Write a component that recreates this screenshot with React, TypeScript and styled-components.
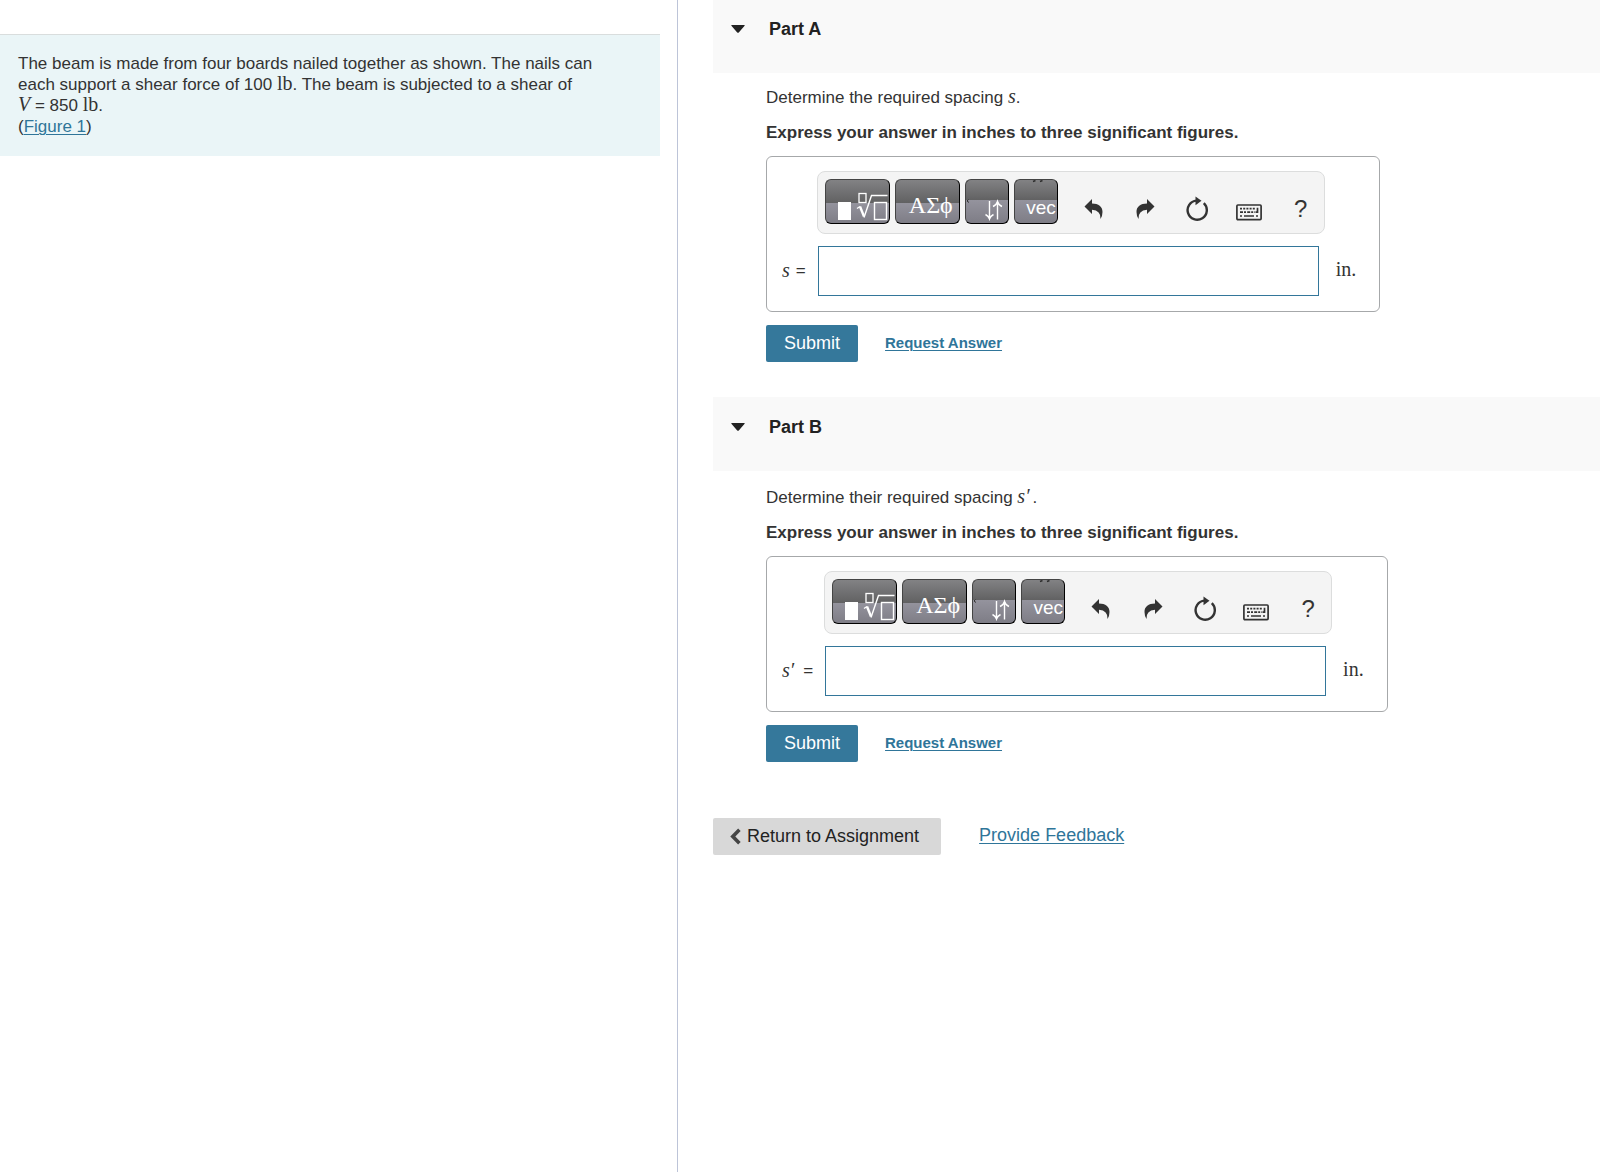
import React, { ReactNode, useId } from "react";
import styled, { createGlobalStyle } from "styled-components";

const GlobalStyle = createGlobalStyle`
  *, *::before, *::after { box-sizing: border-box; }
  body {
    margin: 0;
    background: #fff;
    color: #333;
    font: 17px/21px "Liberation Sans", Arial, Helvetica, sans-serif;
  }
  button, input { font: inherit; color: inherit; }
  a { color: #2f7599; text-decoration: underline; text-underline-offset: 2px; text-decoration-thickness: 1px; }
`;

const Page = styled.div`
  display: grid;
  grid-template-columns: minmax(0, 677fr) minmax(0, 923fr);
  min-height: 100vh;
`;

const ProblemPane = styled.aside`
  padding: 34px 17px 0 0;
`;

const ProblemBox = styled.div`
  padding: 18px 54px 19px 18px;
  border-top: 1px solid #d9dddd;
  background: #eaf5f7;
`;

const Paragraph = styled.p`
  margin: 0;
`;

const Equation = styled.span`
  white-space: nowrap;
`;

const MathText = styled.span<{ $italic?: boolean }>`
  font-family: "Liberation Serif", "Times New Roman", serif;
  font-size: 20px;
  line-height: 0;
  font-style: ${(p) => (p.$italic ? "italic" : "normal")};
`;

const Prime = styled.span`
  margin-right: 3px;
  line-height: 22px;
`;

const WorkPane = styled.main`
  margin-top: -1px;
  border-left: 1px solid #bdc4d8;
  padding-left: 35px;
  overflow: hidden;
`;

const PartHeader = styled.button`
  display: flex;
  align-items: center;
  gap: 24px;
  width: 100%;
  height: 74px;
  padding: 0 18px 14px;
  border: 0;
  background: #f9f9f9;
  color: #222;
  font-size: 18px;
  font-weight: bold;
`;

const PartBody = styled.div`
  padding: 14px 20px 35px 53px;
`;

const Question = styled.p`
  margin: 0 0 14px;
`;

const Instruction = styled.p`
  margin: 0 0 13px;
  font-weight: bold;
`;

const AnswerBox = styled.div`
  display: flex;
  width: fit-content;
  max-width: 100%;
  padding: 14px 23px 15px 15px;
  border: 1px solid #a6a8aa;
  border-radius: 6px;
`;

const AnswerLabel = styled.label`
  display: flex;
  align-items: center;
  gap: 6px;
  height: 50px;
  margin: 75px 11px 0 0;
  padding-bottom: 2px;
`;

const Unit = styled.span`
  display: flex;
  align-items: center;
  height: 50px;
  margin: 75px 0 0 11px;
  padding-bottom: 4px;
`;

const Entry = styled.div`
  flex: 0 1 auto;
  width: 508px;
  min-width: 0;
`;

const Toolbar = styled.div`
  display: flex;
  align-items: flex-start;
  gap: 5px;
  height: 63px;
  padding: 7px;
  border: 1px solid #dcdddd;
  border-radius: 8px;
  background: #f4f4f4;
`;

const MathButton = styled.button<{ $narrow?: boolean }>`
  display: flex;
  flex: none;
  align-items: flex-end;
  justify-content: flex-end;
  width: ${(p) => (p.$narrow ? 44 : 65)}px;
  height: 45px;
  padding: 0;
  border: 1px solid #000;
  border-top-color: #444;
  border-left-color: #444;
  border-radius: 6px;
  overflow: hidden;
  color: #fff;
  background: linear-gradient(
    #828284,
    #616162 ${(p) => (p.$narrow ? 47 : 53)}%,
    #94939d ${(p) => (p.$narrow ? 47 : 53)}%,
    #7e7d86
  );
`;

const GreekText = styled.span`
  padding: 0 6px 5px 0;
  font: 24px/26px "Liberation Serif", "Times New Roman", serif;
`;

const VecText = styled.span`
  padding: 0 1px 3px 0;
  font-size: 19px;
  line-height: 24px;
`;

const VecFace = styled.span`
  display: flex;
  flex-direction: column;
  justify-content: space-between;
  align-items: flex-end;
  height: 100%;
`;

const IconTools = styled.div`
  display: flex;
  flex: 1;
  justify-content: space-between;
  padding: 16px 0 0 15px;
`;

const IconButton = styled.button`
  display: flex;
  align-items: center;
  justify-content: center;
  width: 32px;
  height: 28px;
  padding: 0;
  border: 0;
  background: none;
`;

const HelpMark = styled.span`
  font-size: 24px;
  line-height: 28px;
`;

const AnswerInput = styled.input`
  display: block;
  width: calc(100% - 7px);
  height: 50px;
  margin: 12px 0 0 1px;
  padding: 0 10px;
  border: 1px solid #33769a;
  border-radius: 0;
  background: #fff;
`;

const Actions = styled.div`
  display: flex;
  align-items: center;
  gap: 27px;
  margin-top: 13px;
`;

const SubmitButton = styled.button`
  height: 37px;
  padding: 0 18px 1px;
  border: 0;
  border-radius: 2px;
  background: #35789b;
  color: #fff;
  font-size: 18px;
`;

const RequestLink = styled.a`
  padding-bottom: 2px;
  font-size: 15px;
  font-weight: bold;
`;

const Footer = styled.footer`
  display: flex;
  align-items: center;
  gap: 38px;
  margin-top: 21px;
`;

const ReturnButton = styled.button`
  display: flex;
  align-items: center;
  gap: 6px;
  height: 37px;
  padding: 0 22px 0 17px;
  border: 0;
  border-radius: 2px;
  background: #d8d8d8;
  color: #222;
  font-size: 18px;
`;

const FeedbackLink = styled.a`
  padding-bottom: 2px;
  font-size: 18px;
`;

const CaretIcon = () => (
  <svg width="14" height="8" viewBox="0 0 14 8" aria-hidden="true">
    <path d="M0.8 0H13.2Q14.3 0 13.4 1L8 7.2Q7 8.3 6 7.2L0.6 1Q-0.3 0 0.8 0Z" fill="#222" />
  </svg>
);

const RootIcon = () => (
  <svg width="63" height="43" viewBox="0 0 63 43" aria-hidden="true">
    <rect x="12" y="22" width="13" height="18" fill="#fff" />
    <g fill="none" stroke="#fff">
      <rect x="33" y="13.5" width="7" height="9" strokeWidth="1.3" />
      <rect x="48.5" y="22.5" width="12" height="17" strokeWidth="1.4" />
      <path d="M31 28.5L34 26.5" strokeWidth="1.3" />
      <path d="M34 26.5L38 36.5" strokeWidth="2.4" />
      <path d="M38 37.5L45.5 15.5H61.5" strokeWidth="1.4" />
    </g>
  </svg>
);

const ArrowsIcon = () => (
  <svg width="42" height="43" viewBox="0 0 42 43" aria-hidden="true">
    <path d="M2.5 19.5L1 21L3 22.5" fill="none" stroke="#333" />
    <g fill="none" stroke="#fff" strokeWidth="1.4">
      <path d="M23.5 21V39M19.5 34.5Q22.5 36 23.5 39Q24.5 36 27.5 34.5" />
      <path d="M31.5 39.5V21.5M27 26.5Q30.5 25 31.5 21.5Q32.5 25 36 26.5" />
    </g>
  </svg>
);

const VecMarks = () => (
  <svg width="42" height="3" viewBox="0 0 42 3" aria-hidden="true">
    <path d="M18 1.5L20.5 0.5M25 1.5L27.5 0.5" stroke="#2b2b2b" strokeWidth="1.4" />
  </svg>
);

const BackArrow = ({ mirrored }: { mirrored?: boolean }) => (
  <svg width="20" height="20" viewBox="0 0 20 20" aria-hidden="true">
    <path
      d="M0.5 7.5L8 0V4.5C14.5 4.5 18.5 7.5 18.5 13Q18.5 17 16.5 20Q17 11.5 8 10.8V15Z"
      fill="#333"
      transform={mirrored ? "translate(20 0) scale(-1 1)" : undefined}
    />
  </svg>
);

const ResetIcon = () => (
  <svg width="24" height="26" viewBox="0 0 24 26" aria-hidden="true">
    <path d="M18.8 7.2A9.6 9.6 0 1 1 11.5 4.6" fill="none" stroke="#333" strokeWidth="2.4" />
    <path d="M10.5 0.5L16.5 4.8L10.5 9.2Z" fill="#333" />
  </svg>
);

const KeyboardIcon = () => (
  <svg width="26" height="26" viewBox="0 -5 26 26" aria-hidden="true">
    <rect x="0.9" y="4" width="24.2" height="14.6" rx="1" fill="none" stroke="#333" strokeWidth="1.7" />
    <g stroke="#333" strokeWidth="1.7" fill="none">
      <path d="M4 7.7H19" strokeDasharray="2 1.2" />
      <path d="M4 11.2H19" strokeDasharray="3 1 2 1.2" />
      <path d="M4 15H6M8 15H18M20 15H22" />
      <path d="M21.5 6.8V12M19.5 11.2H22.3" />
    </g>
  </svg>
);

const ChevronIcon = () => (
  <svg width="11" height="17" viewBox="0 0 11 17" aria-hidden="true">
    <path d="M9.4 1.8L2.8 8.5L9.4 15.2" fill="none" stroke="#444" strokeWidth="3.6" />
  </svg>
);

const AnswerPart = ({ title, question, primed }: { title: string; question: string; primed?: boolean }) => {
  const inputId = useId();
  const variable: ReactNode = <MathText $italic>s{primed && <Prime>′</Prime>}</MathText>;
  return (
    <section>
      <PartHeader type="button" aria-expanded="true">
        <CaretIcon />
        {title}
      </PartHeader>
      <PartBody>
        <Question>
          {question} {variable}.
        </Question>
        <Instruction>Express your answer in inches to three significant figures.</Instruction>
        <AnswerBox>
          <AnswerLabel htmlFor={inputId}>
            {variable}
            <span>=</span>
          </AnswerLabel>
          <Entry>
            <Toolbar>
              <MathButton type="button" aria-label="Templates">
                <RootIcon />
              </MathButton>
              <MathButton type="button">
                <GreekText>ΑΣϕ</GreekText>
              </MathButton>
              <MathButton type="button" $narrow aria-label="Arrows">
                <ArrowsIcon />
              </MathButton>
              <MathButton type="button" $narrow>
                <VecFace>
                  <VecMarks />
                  <VecText>vec</VecText>
                </VecFace>
              </MathButton>
              <IconTools>
                <IconButton type="button" aria-label="Undo">
                  <BackArrow />
                </IconButton>
                <IconButton type="button" aria-label="Redo">
                  <BackArrow mirrored />
                </IconButton>
                <IconButton type="button" aria-label="Reset">
                  <ResetIcon />
                </IconButton>
                <IconButton type="button" aria-label="Keyboard shortcuts">
                  <KeyboardIcon />
                </IconButton>
                <IconButton type="button">
                  <HelpMark>?</HelpMark>
                </IconButton>
              </IconTools>
            </Toolbar>
            <AnswerInput id={inputId} type="text" />
          </Entry>
          <Unit>
            <MathText>in.</MathText>
          </Unit>
        </AnswerBox>
        <Actions>
          <SubmitButton type="button">Submit</SubmitButton>
          <RequestLink href="#">Request Answer</RequestLink>
        </Actions>
      </PartBody>
    </section>
  );
};

export default function App() {
  return (
    <>
      <GlobalStyle />
      <Page>
        <ProblemPane>
          <ProblemBox>
            <Paragraph>
              The beam is made from four boards nailed together as shown. The nails can each support a shear force of
              100 <MathText>lb</MathText>. The beam is subjected to a shear of{" "}
              <Equation>
                <MathText $italic>V</MathText> = 850 <MathText>lb</MathText>.
              </Equation>
            </Paragraph>
            <Paragraph>
              (<a href="#">Figure 1</a>)
            </Paragraph>
          </ProblemBox>
        </ProblemPane>
        <WorkPane>
          <AnswerPart title="Part A" question="Determine the required spacing" />
          <AnswerPart title="Part B" question="Determine their required spacing" primed />
          <Footer>
            <ReturnButton type="button">
              <ChevronIcon />
              Return to Assignment
            </ReturnButton>
            <FeedbackLink href="#">Provide Feedback</FeedbackLink>
          </Footer>
        </WorkPane>
      </Page>
    </>
  );
}
